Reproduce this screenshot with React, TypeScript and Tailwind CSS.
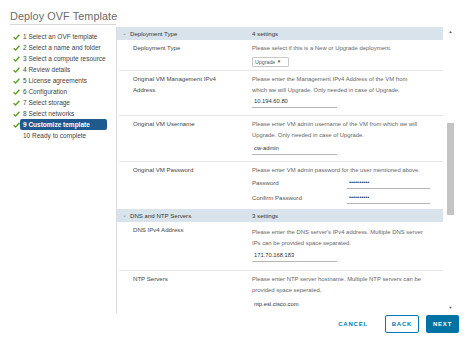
import React from "react";

const steps = [
  "1 Select an OVF template",
  "2 Select a name and folder",
  "3 Select a compute resource",
  "4 Review details",
  "5 License agreements",
  "6 Configuration",
  "7 Select storage",
  "8 Select networks",
  "9 Customize template",
  "10 Ready to complete",
];

function Check() {
  return (
    <svg width="7" height="6" viewBox="0 0 7 6" className="shrink-0">
      <path d="M0.6 3.2 L2.6 5 L6.4 0.8" fill="none" stroke="#5aa220" strokeWidth="1.4" />
    </svg>
  );
}

function SectionHeader({ title, count }: { title: string; count: string }) {
  return (
    <div className="flex items-center h-[13px] bg-[#d9e3ec] text-[6.1px] text-[#333]">
      <div className="w-[135px] flex items-center pl-[5px]">
        <span className="text-[#8a9aa8] text-[6px] w-[8px]">⌄</span>
        <span>{title}</span>
      </div>
      <span>{count}</span>
    </div>
  );
}

function Field({ value, width = "w-[85px]" }: { value: string; width?: string }) {
  return (
    <div className={`${width} border-b border-[#b5b5b5] pl-[2px] pb-[1px] text-[5.8px] text-[#333] leading-[9px] whitespace-nowrap`}>
      {value}
    </div>
  );
}

function Row({
  label,
  height,
  children,
  last,
}: {
  label: React.ReactNode;
  height: string;
  children: React.ReactNode;
  last?: boolean;
}) {
  return (
    <div className={`flex ${height} ml-[2px] ${last ? "" : "border-b border-[#e6e6e6]"}`}>
      <div className="w-[133px] pl-[14px] pt-[3px] text-[6.1px] leading-[10.5px] text-[#444]">{label}</div>
      <div className="flex-1 pt-[3px] text-[5.9px] leading-[10.5px] text-[#666] whitespace-nowrap">{children}</div>
    </div>
  );
}

export default function App() {
  return (
    <div
      className="w-[466px] h-[340px] bg-white overflow-hidden flex flex-col"
      style={{ fontFamily: '"Liberation Sans", Arial, sans-serif' }}
    >
      {/* Title */}
      <div className="h-[24px] pl-[10px] pt-[8px] text-[10.8px] leading-[16px] text-[#6a6a6a] tracking-[0.1px]">
        Deploy OVF Template
      </div>

      <div className="flex h-[289px]">
        {/* Steps */}
        <div className="w-[116px] shrink-0 flex flex-col">
          <div className="ml-[10px] border-t border-[#d8d8d8] pt-[6px]">
            {steps.map((s, i) => {
              const active = i === 8;
              const done = i < 9;
              return (
                <div key={s} className="flex items-center h-[11px] pl-[3px]">
                  <div className="w-[10px] flex items-center">{done && <Check />}</div>
                  <div
                    className={`flex-1 mr-[9px] -ml-[3px] pl-[3px] h-[11px] rounded-[2px] flex items-center text-[6.5px] whitespace-nowrap ${
                      active ? "bg-[#1e5a8f] text-white font-bold" : "text-[#444]"
                    }`}
                  >
                    {s}
                  </div>
                </div>
              );
            })}
          </div>
        </div>

        {/* Settings */}
        <div className="flex-1 flex pt-[3px]">
          <div className="w-[327px] border-l border-[#dcdcdc] flex flex-col">
            <SectionHeader title="Deployment Type" count="4 settings" />
            <Row label="Deployment Type" height="h-[31px]">
              <div>Please select if this is a New or Upgrade deployment.</div>
              <div className="mt-[3px] w-[37px] h-[10px] border border-[#c8c8c8] rounded-[1px] flex items-center pl-[2px] text-[5.3px] text-[#555] leading-[8px]">
                Upgrade&nbsp;<span className="text-[4.5px]">▼</span>
              </div>
            </Row>
            <Row
              label={
                <>
                  Original VM Management IPv4
                  <br />
                  Address
                </>
              }
              height="h-[45px]"
            >
              <div>Please enter the Management IPv4 Address of the VM from</div>
              <div>which we will Upgrade. Only needed in case of Upgrade.</div>
              <div className="mt-[2px]">
                <Field value="10.194.60.80" />
              </div>
            </Row>
            <Row label="Original VM Username" height="h-[46px]">
              <div>Please enter VM admin username of the VM from which we will</div>
              <div>Upgrade. Only needed in case of Upgrade.</div>
              <div className="mt-[4px]">
                <Field value="cw-admin" />
              </div>
            </Row>
            <Row label="Original VM Password" height="h-[47px]" last>
              <div>Please enter VM admin password for the user mentioned above.</div>
              <div className="flex items-end mt-[2px]">
                <div className="w-[95px] text-[6.1px] text-[#555]">Password</div>
                <Field value="••••••••••" width="w-[83px]" />
              </div>
              <div className="flex items-end mt-[4px]">
                <div className="w-[95px] text-[6.1px] text-[#555]">Confirm Password</div>
                <Field value="••••••••••" width="w-[83px]" />
              </div>
            </Row>
            <SectionHeader title="DNS and NTP Servers" count="3 settings" />
            <Row label="DNS IPv4 Address" height="h-[49px]">
              <div className="pt-[2px]">Please enter the DNS server's IPv4 address. Multiple DNS server</div>
              <div>IPs can be provided space separated.</div>
              <div className="mt-[3px]">
                <Field value="171.70.168.183" />
              </div>
            </Row>
            <Row label="NTP Servers" height="flex-1" last>
              <div>Please enter NTP server hostname. Multiple NTP servers can be</div>
              <div>provided space seperated.</div>
              <div className="mt-[4px] pl-[2px] text-[5.8px] text-[#333]">ntp.esl.cisco.com</div>
            </Row>
          </div>

          {/* Scrollbar */}
          <div className="w-[17px] flex flex-col items-end pr-[5px]">
            <div className="w-[9px] h-[10px] flex items-center justify-center text-[4px] text-[#555]">▲</div>
            <div className="w-[7px] flex-1 relative mr-[1px]">
              <div className="absolute left-0 right-0 top-[86px] h-[92px] bg-[#c4c4c4]" />
            </div>
            <div className="w-[9px] h-[10px] flex items-center justify-center text-[4px] text-[#555]">▼</div>
          </div>
        </div>
      </div>

      {/* Footer */}
      <div className="flex items-start justify-end gap-[7px] pr-[7px] pt-[2px]">
        <div className="h-[18px] px-[10px] flex items-center text-[6px] font-bold tracking-[0.8px] text-[#0079b8]">CANCEL</div>
        <div className="h-[18px] w-[34px] border border-[#0079b8] rounded-[2px] flex items-center justify-center text-[6px] font-bold tracking-[0.8px] text-[#0079b8]">
          BACK
        </div>
        <div className="h-[18px] w-[33px] bg-[#0072a3] rounded-[2px] flex items-center justify-center text-[6px] font-bold tracking-[0.8px] text-white">
          NEXT
        </div>
      </div>
    </div>
  );
}
